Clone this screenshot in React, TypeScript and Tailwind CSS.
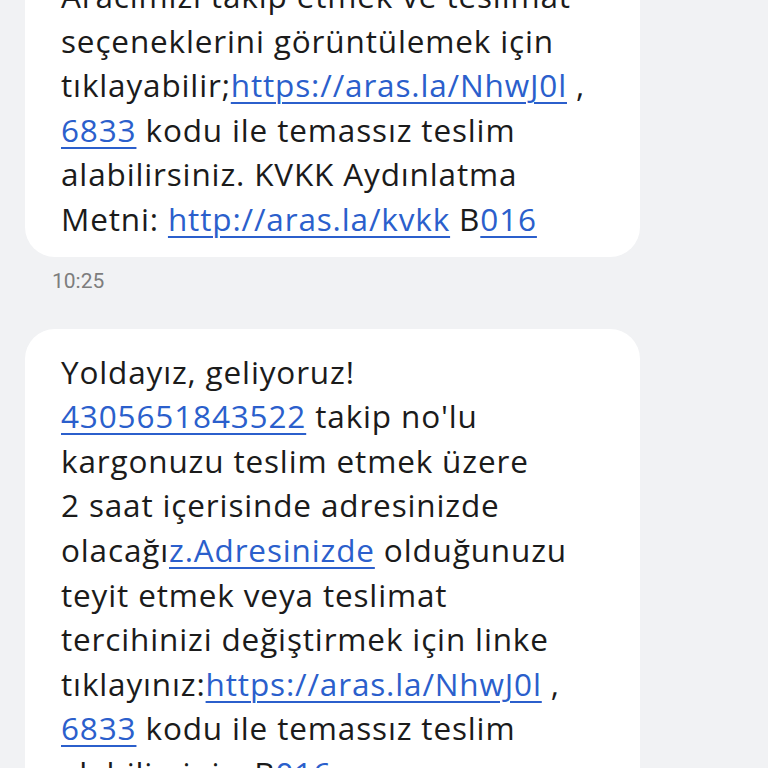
import React from "react";

const L = ({ children }: { children: React.ReactNode }) => (
  <span className="text-[#2b5fcc] underline decoration-[1.5px] underline-offset-[5px]">{children}</span>
);

export default function App() {
  return (
    <div className="w-[768px] h-[768px] overflow-hidden bg-[#f1f2f4] font-['Open_Sans',sans-serif]">
      <div className="mt-[-48px] flex flex-col">
        <div className="ml-[25px] w-[615px] rounded-[30px] bg-white pl-[36px] pr-[10px] pt-[22px] pb-[15px] text-[31.5px] tracking-[0.85px] leading-[44.6px] text-[#1b1b1b]">
          <div className="whitespace-nowrap">Aracımızı takip etmek ve teslimat</div>
          <div className="whitespace-nowrap">seçeneklerini görüntülemek için</div>
          <div className="whitespace-nowrap">tıklayabilir;<L>https://aras.la/NhwJ0l</L> ,</div>
          <div className="whitespace-nowrap"><L>6833</L> kodu ile temassız teslim</div>
          <div className="whitespace-nowrap">alabilirsiniz. KVKK Aydınlatma</div>
          <div className="whitespace-nowrap">Metni: <L>http://aras.la/kvkk</L> B<L>016</L></div>
        </div>
        <div className="ml-[52px] mt-[10px] text-[21px] leading-[28px] text-[#7d7d7d] font-['Roboto',sans-serif]">10:25</div>
        <div className="ml-[25px] mt-[34px] w-[615px] rounded-[30px] bg-white pl-[36px] pr-[10px] pt-[21px] pb-[16px] text-[31.5px] tracking-[0.85px] leading-[44.6px] text-[#1b1b1b]">
          <div className="whitespace-nowrap">Yoldayız, geliyoruz!</div>
          <div className="whitespace-nowrap"><L>4305651843522</L> takip no'lu</div>
          <div className="whitespace-nowrap">kargonuzu teslim etmek üzere</div>
          <div className="whitespace-nowrap">2 saat içerisinde adresinizde</div>
          <div className="whitespace-nowrap">olacağı<L>z.Adresinizde</L> olduğunuzu</div>
          <div className="whitespace-nowrap">teyit etmek veya teslimat</div>
          <div className="whitespace-nowrap">tercihinizi değiştirmek için linke</div>
          <div className="whitespace-nowrap">tıklayınız:<L>https://aras.la/NhwJ0l</L> ,</div>
          <div className="whitespace-nowrap"><L>6833</L> kodu ile temassız teslim</div>
          <div className="whitespace-nowrap">alabilirsiniz. B<L>016</L></div>
        </div>
      </div>
    </div>
  );
}
